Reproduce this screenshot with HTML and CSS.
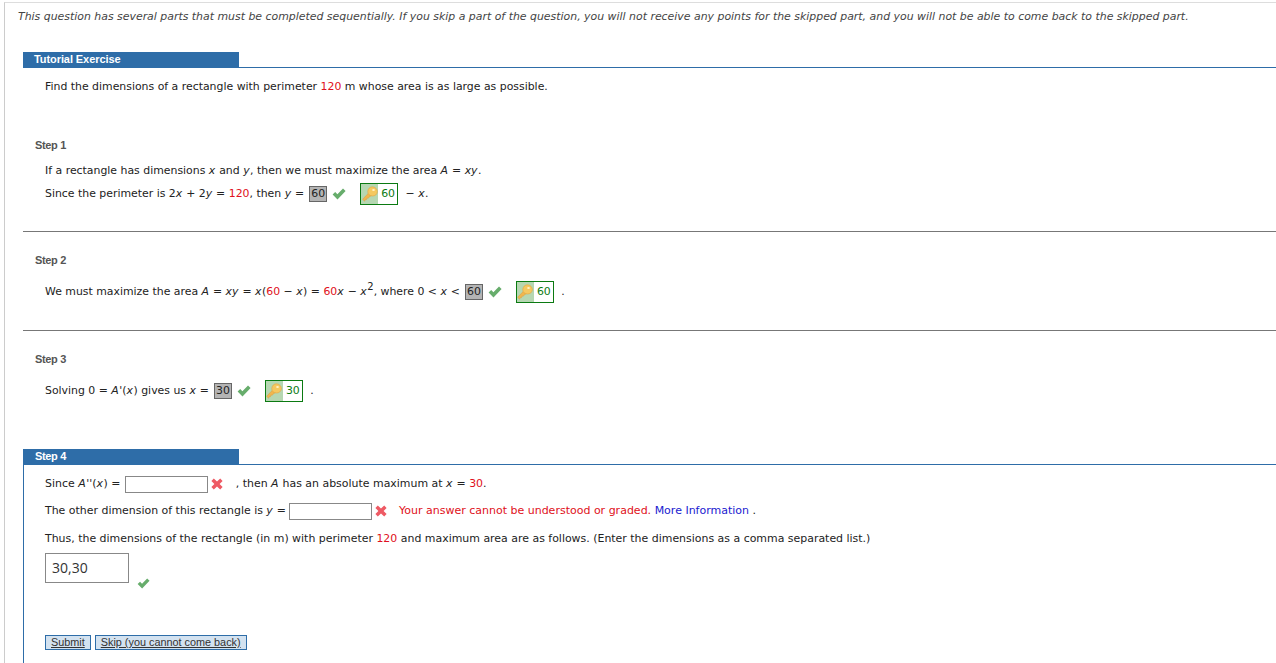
FILE: index.html
```html
<!DOCTYPE html>
<html lang="en">
<head>
    <meta charset="UTF-8">
    <title>Tutorial Exercise</title>
    <link rel="stylesheet" href="styles.css">
</head>
<body>
    <svg class="defs" width="0" height="0">
        <defs>
            <symbol id="check" viewBox="0 0 14 12">
                <path d="M.6 6.6 L3.2 4 L5.4 6.2 L11 .6 L13.6 3 L5.5 11.4 Z" fill="#67ad6c"/>
            </symbol>
            <symbol id="cross" viewBox="0 0 12 12">
                <path d="M2.8 .6 L6 3.4 L9.2 .6 L11.6 3 L8.6 6 L11.6 9 L9.2 11.4 L6 8.6 L2.8 11.4 L.4 9 L3.4 6 L.4 3 Z" fill="#ee5a64"/>
            </symbol>
            <symbol id="key" viewBox="0 0 15 15">
                <path d="M.6 12.4 L6.6 6.2 L9.2 8.8 L6.8 10.2 L5.8 11.6 L4.5 11.3 L4.3 12.8 L2.9 12.9 L2.4 14.4 Z" fill="#f0b64e" stroke="#d99a38" stroke-width=".4"/>
                <path d="M5.4 5.4 C5.4 2.5 7.5 .8 9.8 .8 C12.5 .8 14.4 3 14.4 5.2 C14.4 7.9 12.1 9.6 9.6 9.4 C7.1 9.2 5.4 7.7 5.4 5.4 Z" fill="#f5c860" stroke="#dca040" stroke-width=".5"/>
                <ellipse cx="10.8" cy="3.7" rx="1.3" ry="1" fill="#fff2c6"/>
            </symbol>
        </defs>
    </svg>
    <div class="page">
        <p class="notice">This question has several parts that must be completed sequentially. If you skip a part of the question, you will not receive any points for the skipped part, and you will not be able to come back to the skipped part.</p>

        <div class="bar-head"><span class="bar-title">Tutorial Exercise</span></div>
        <p class="line intro">Find the dimensions of a rectangle with perimeter <span class="num">120</span> m whose area is as large as possible.</p>

        <section class="step step-1">
            <h3>Step 1</h3>
            <p class="line">If a rectangle has dimensions <i>x</i> and <i>y</i>, then we must maximize the area <i>A</i> = <i>xy</i>.</p>
            <p class="line second">Since the perimeter is 2<i>x</i> + 2<i>y</i> = <span class="num">120</span>, then <i>y</i> = <span class="given">60</span><svg class="icon tick"><use href="#check"/></svg><span class="key"><span class="key-icon"><svg width="16" height="16"><use href="#key"/></svg></span><span class="key-val">60</span></span> <span class="after">&minus; <i>x</i>.</span></p>
        </section>

        <section class="step step-2">
            <h3>Step 2</h3>
            <p class="line">We must maximize the area <i>A</i> = <i>xy</i> = <i>x</i>(<span class="num">60</span> &minus; <i>x</i>) = <span class="num">60</span><i>x</i> &minus; <i>x</i><sup>2</sup>, where 0 &lt; <i>x</i> &lt; <span class="given">60</span><svg class="icon tick"><use href="#check"/></svg><span class="key"><span class="key-icon"><svg width="16" height="16"><use href="#key"/></svg></span><span class="key-val">60</span></span> <span class="after">.</span></p>
        </section>

        <section class="step step-3">
            <h3>Step 3</h3>
            <p class="line">Solving 0 = <i>A</i>'(<i>x</i>) gives us <i>x</i> = <span class="given">30</span><svg class="icon tick"><use href="#check"/></svg><span class="key"><span class="key-icon"><svg width="16" height="16"><use href="#key"/></svg></span><span class="key-val">30</span></span> <span class="after">.</span></p>
        </section>

        <div class="bar-head current"><span class="bar-title step-title">Step 4</span></div>
        <div class="panel">
            <p class="row">Since <i>A</i>''(<i>x</i>) = <input class="blank blank-first" type="text"><svg class="icon wrong"><use href="#cross"/></svg><span class="gap-comma">, then <i>A</i> has an absolute maximum at <i>x</i> = <span class="num">30</span>.</span></p>
            <p class="row">The other dimension of this rectangle is <i>y</i> = <input class="blank" type="text"><svg class="icon wrong"><use href="#cross"/></svg><span class="err">Your answer cannot be understood or graded. <a href="#more">More Information</a> <span class="plain">.</span></span></p>
            <p class="row">Thus, the dimensions of the rectangle (in m) with perimeter <span class="num">120</span> and maximum area are as follows. (Enter the dimensions as a comma separated list.)</p>
            <div class="answer-row">
                <input class="big" type="text" value="30,30">
                <svg class="icon big-tick"><use href="#check"/></svg>
            </div>
            <div class="buttons">
                <button class="btn" type="button">Submit</button>
                <button class="btn" type="button">Skip (you cannot come back)</button>
            </div>
        </div>
    </div>
</body>
</html>
```
FILE: styles.css
```css
html, body {
    margin: 0;
    padding: 0;
    background: #fff;
    overflow: hidden;
}
body {
    height: 663px;
    font-family: "DejaVu Sans", Verdana, sans-serif;
    font-size: 10.9px;
    color: #222;
}
.defs {
    position: absolute;
}
.page {
    margin-top: 2px;
    margin-left: 4px;
    padding-left: 18px;
    height: 661px;
    border-top: 1px solid #ddd;
    border-left: 1px solid #ccc;
    box-sizing: border-box;
}
p {
    margin: 0;
}
i {
    padding-right: 0.5px;
}
.notice {
    margin-top: 1px;
    margin-left: -5px;
    height: 26px;
    line-height: 26px;
    font-size: 10.92px;
    font-style: italic;
    color: #444;
    white-space: nowrap;
}
.bar-head {
    margin-top: 22px;
    height: 15px;
    border-bottom: 1px solid #2e6da8;
}
.bar-title {
    display: block;
    width: 205px;
    height: 15px;
    padding-left: 11px;
    background: #2e6da8;
    color: #fff;
    font: bold 11px/15px "Liberation Sans", Arial, sans-serif;
    letter-spacing: -0.08px;
}
.step-title {
    padding-left: 12px;
    width: 204px;
    letter-spacing: -0.35px;
}
.line {
    margin-left: 22px;
    height: 23px;
    line-height: 23px;
    white-space: nowrap;
}
.intro {
    margin-top: 7px;
}
.num {
    color: #e01020;
}
.step {
    border-bottom: 1px solid #777;
}
.step h3 {
    margin: 0 0 0 12px;
    font: bold 11px/14px "Liberation Sans", Arial, sans-serif;
    letter-spacing: -0.35px;
    color: #555;
}
.step-1 {
    margin-top: 40px;
    height: 93px;
}
.step-1 h3 {
    margin-bottom: 7px;
}
.step-2 {
    padding-top: 21px;
    height: 77px;
}
.step-2 h3 {
    margin-bottom: 13px;
}
.step-3 {
    padding-top: 21px;
    border-bottom: 0;
    height: 97px;
}
.step-3 h3 {
    margin-bottom: 13px;
}
.given {
    display: inline-block;
    min-width: 13px;
    height: 14px;
    line-height: 14px;
    margin-left: 1.5px;
    padding: 0 1px;
    text-align: center;
    background: #b4b4b4;
    border: 1px solid #666;
    vertical-align: middle;
}
.icon {
    vertical-align: middle;
}
.tick {
    width: 14px;
    height: 12px;
    margin-left: 5px;
}
.key {
    display: inline-flex;
    height: 20px;
    margin-left: 14px;
    border: 1px solid #0b7a12;
    vertical-align: middle;
}
.key-icon {
    display: flex;
    align-items: center;
    justify-content: center;
    width: 17px;
    background: #b6d7b2;
}
.key-val {
    width: 18px;
    padding-left: 1px;
    line-height: 20px;
    text-align: center;
    color: #0b7a12;
}
.after {
    margin-left: 4px;
}
sup {
    font-size: 10px;
    line-height: 0;
}
.bar-head.current {
    margin-top: 0;
}
.panel {
    height: 200px;
    border-left: 1px solid #2e6da8;
    padding-left: 21px;
    padding-top: 5px;
    box-sizing: border-box;
}
.row {
    height: 27px;
    line-height: 27px;
    font-size: 10.95px;
    white-space: nowrap;
}
.row:nth-child(3) {
    margin-top: 1px;
}
.blank {
    width: 83px;
    height: 17px;
    box-sizing: border-box;
    margin: 0 0 0 -0.5px;
    padding: 0 2px;
    border: 1px solid #888;
    vertical-align: middle;
}
.blank-first {
    margin-left: 1px;
}
.wrong {
    width: 12px;
    height: 12px;
    margin-left: 3px;
    vertical-align: -3px;
}
.gap-comma {
    margin-left: 13px;
}
.err {
    margin-left: 12px;
    font-size: 11px;
    color: #e01020;
}
.err a {
    color: #1a1ad0;
    text-decoration: none;
}
.plain {
    color: #222;
}
.answer-row {
    display: flex;
    align-items: flex-end;
    margin-top: 1px;
}
.big {
    width: 84px;
    height: 30px;
    box-sizing: border-box;
    margin: 0;
    padding: 0 6px 2px;
    border: 1px solid #888;
    font-family: "Open Sans", Verdana, sans-serif;
    font-size: 14px;
    color: #333;
}
.big-tick {
    width: 13px;
    height: 11px;
    margin-left: 8px;
    margin-bottom: -6px;
}
.buttons {
    display: flex;
    gap: 4px;
    margin-top: 52px;
}
.btn {
    height: 15px;
    margin: 0;
    padding: 0 5px;
    border: 1px solid #2e6da8;
    background: #d3e2f0;
    color: #333;
    font: 10.85px/13px "Liberation Sans", Arial, sans-serif;
    text-decoration: underline;
}
```
